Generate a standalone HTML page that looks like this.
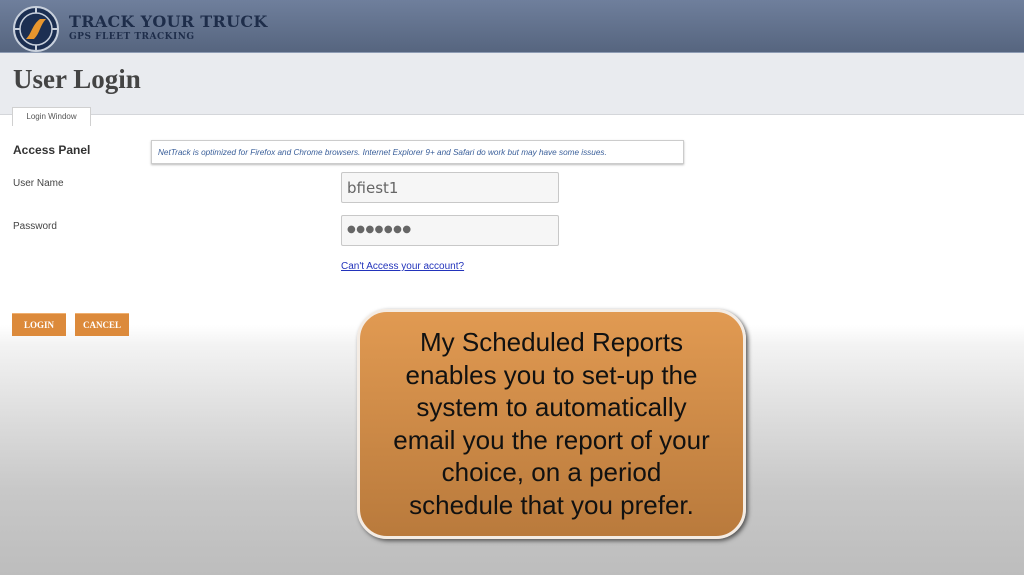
<!DOCTYPE html>
<html><head><meta charset="utf-8"><style>
*{margin:0;padding:0;box-sizing:border-box}
body{width:1024px;height:575px;overflow:hidden;position:relative;font-family:"Liberation Sans",sans-serif;background:linear-gradient(#fff 0,#fff 325px,#f3f3f3 345px,#dcdcdc 420px,#c8c8c8 490px,#bdbdbd 575px)}
.hdr{position:absolute;left:0;top:0;width:1024px;height:53px;background:linear-gradient(#6f7f9c,#56657f);border-bottom:1px solid #8e9cb4}
.band{position:absolute;left:0;top:53px;width:1024px;height:62px;background:#e9ebef;border-bottom:1px solid #d4d6da}
.t{position:absolute;white-space:nowrap}
.inp{position:absolute;left:341px;width:218px;height:31px;background:#f6f6f6;border:1px solid #c8c8c8;border-radius:2px;font-family:"DejaVu Sans",sans-serif;color:#666;font-size:15px;padding:6px 5px}
.btn{position:absolute;top:313px;height:23px;background:#dc8a3b;color:#fff;font-family:"Liberation Serif",serif;font-weight:bold;font-size:9px;text-align:center;line-height:23px;border-top:1px solid #f0b070}
.box{position:absolute;left:357px;top:309px;width:389px;height:230px;border-radius:30px;background:linear-gradient(#e19a52,#b97a3c);border:3px solid #f4ece4;box-shadow:2px 2px 4px #555;text-align:center;font-size:26px;line-height:32.6px;color:#111;padding-top:14px}
</style></head><body>
<div class="hdr"></div>
<svg style="position:absolute;left:12px;top:5px" width="48" height="48" viewBox="0 0 48 48">
<circle cx="24" cy="24" r="22" fill="#1c2f52" stroke="#c8d0dc" stroke-width="2"/>
<circle cx="24" cy="24" r="16" fill="none" stroke="#c8d0dc" stroke-width="1.5"/>
<path d="M14 34 C20 28 20 20 28 14 L34 14 C28 20 28 28 22 34 Z" fill="#e8962e"/>
<path d="M24 2v6M24 40v6M2 24h6M40 24h6" stroke="#c8d0dc" stroke-width="2"/>
</svg>
<div class="t" style="left:69px;top:12px;font-family:'DejaVu Serif',serif;font-weight:bold;font-size:16px;color:#1e2d4a;letter-spacing:0.3px">TRACK YOUR TRUCK</div>
<div class="t" style="left:69px;top:32px;font-family:'DejaVu Serif',serif;font-weight:bold;font-size:9px;color:#1e2d4a;letter-spacing:0.5px">GPS FLEET TRACKING</div>
<div class="band"></div>
<div class="t" style="left:13px;top:64px;font-family:'Liberation Serif',serif;font-weight:bold;font-size:27px;color:#444">User Login</div>
<div class="t" style="left:12px;top:107px;width:79px;height:19px;background:#fff;border:1px solid #d0d0d0;border-bottom:none;font-size:8px;color:#555;text-align:center;line-height:18px">Login Window</div>
<div class="t" style="left:13px;top:143px;font-weight:bold;font-size:12px;color:#333">Access Panel</div>
<div class="t" style="left:151px;top:140px;width:533px;height:24px;background:#fff;border:1px solid #ccc;box-shadow:0 1px 2px #bbb;font-style:italic;font-size:8.2px;color:#3a5f9a;line-height:23px;padding-left:6px">NetTrack is optimized for Firefox and Chrome browsers. Internet Explorer 9+ and Safari do work but may have some issues.</div>
<div class="t" style="left:13px;top:178px;font-size:10px;color:#444">User Name</div>
<div class="t" style="left:13px;top:221px;font-size:10px;color:#444">Password</div>
<div class="inp" style="top:172px">bfiest1</div>
<div class="inp" style="top:215px;letter-spacing:0.5px;font-size:10px;padding-top:8px">●●●●●●●</div>
<div class="t" style="left:341px;top:261px;font-size:10px;color:#2233bb;text-decoration:underline">Can't Access your account?</div>
<div class="btn" style="left:12px;width:54px">LOGIN</div>
<div class="btn" style="left:75px;width:54px">CANCEL</div>
<div class="box">My Scheduled Reports<br>enables you to set-up the<br>system to automatically<br>email you the report of your<br>choice, on a period<br>schedule that you prefer.</div>
</body></html>
